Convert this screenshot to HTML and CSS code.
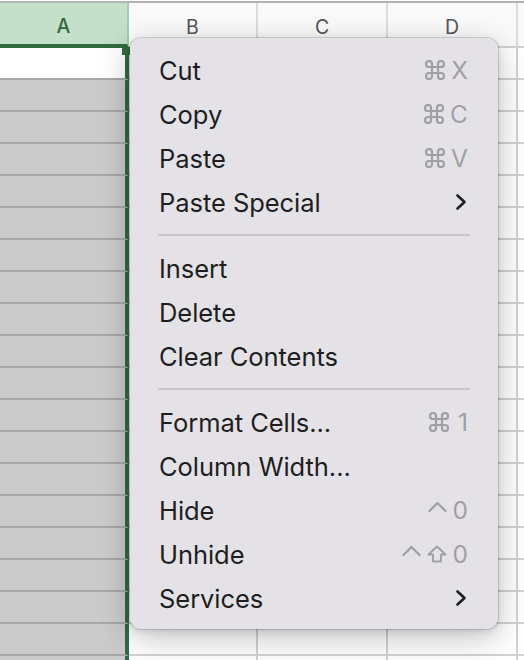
FILE: index.html
```html
<!DOCTYPE html>
<html>
<head>
<meta charset="utf-8">
<link rel="stylesheet" href="styles.css">
</head>
<body>
<div class="sheet">
  <div class="row header">
    <div class="cell ca hdr-a">A</div>
    <div class="cell cb hdr">B</div>
    <div class="cell cc hdr">C</div>
    <div class="cell cd hdr">D</div>
    <div class="cell ce hdr"></div>
  </div>
  <div class="row"><div class="cell ca active"></div><div class="cell cb"></div><div class="cell cc"></div><div class="cell cd"></div><div class="cell ce"></div></div>
  <div class="row"><div class="cell ca"></div><div class="cell cb"></div><div class="cell cc"></div><div class="cell cd"></div><div class="cell ce"></div></div>
  <div class="row"><div class="cell ca"></div><div class="cell cb"></div><div class="cell cc"></div><div class="cell cd"></div><div class="cell ce"></div></div>
  <div class="row"><div class="cell ca"></div><div class="cell cb"></div><div class="cell cc"></div><div class="cell cd"></div><div class="cell ce"></div></div>
  <div class="row"><div class="cell ca"></div><div class="cell cb"></div><div class="cell cc"></div><div class="cell cd"></div><div class="cell ce"></div></div>
  <div class="row"><div class="cell ca"></div><div class="cell cb"></div><div class="cell cc"></div><div class="cell cd"></div><div class="cell ce"></div></div>
  <div class="row"><div class="cell ca"></div><div class="cell cb"></div><div class="cell cc"></div><div class="cell cd"></div><div class="cell ce"></div></div>
  <div class="row"><div class="cell ca"></div><div class="cell cb"></div><div class="cell cc"></div><div class="cell cd"></div><div class="cell ce"></div></div>
  <div class="row"><div class="cell ca"></div><div class="cell cb"></div><div class="cell cc"></div><div class="cell cd"></div><div class="cell ce"></div></div>
  <div class="row"><div class="cell ca"></div><div class="cell cb"></div><div class="cell cc"></div><div class="cell cd"></div><div class="cell ce"></div></div>
  <div class="row"><div class="cell ca"></div><div class="cell cb"></div><div class="cell cc"></div><div class="cell cd"></div><div class="cell ce"></div></div>
  <div class="row"><div class="cell ca"></div><div class="cell cb"></div><div class="cell cc"></div><div class="cell cd"></div><div class="cell ce"></div></div>
  <div class="row"><div class="cell ca"></div><div class="cell cb"></div><div class="cell cc"></div><div class="cell cd"></div><div class="cell ce"></div></div>
  <div class="row"><div class="cell ca"></div><div class="cell cb"></div><div class="cell cc"></div><div class="cell cd"></div><div class="cell ce"></div></div>
  <div class="row"><div class="cell ca"></div><div class="cell cb"></div><div class="cell cc"></div><div class="cell cd"></div><div class="cell ce"></div></div>
  <div class="row"><div class="cell ca"></div><div class="cell cb"></div><div class="cell cc"></div><div class="cell cd"></div><div class="cell ce"></div></div>
  <div class="row"><div class="cell ca"></div><div class="cell cb"></div><div class="cell cc"></div><div class="cell cd"></div><div class="cell ce"></div></div>
  <div class="row"><div class="cell ca"></div><div class="cell cb"></div><div class="cell cc"></div><div class="cell cd"></div><div class="cell ce"></div></div>
  <div class="row"><div class="cell ca"></div><div class="cell cb"></div><div class="cell cc"></div><div class="cell cd"></div><div class="cell ce"></div></div>
  <div class="row"><div class="cell ca"></div><div class="cell cb"></div><div class="cell cc"></div><div class="cell cd"></div><div class="cell ce"></div></div>
</div>
<div class="fill-handle"></div>

<div class="menu">
  <div class="item"><span class="label">Cut</span><span class="keys"><svg class="cmd" width="20" height="20" viewBox="2 2 20 20"><path d="M15 6v12a3 3 0 1 0 3-3H6a3 3 0 1 0 3 3V6a3 3 0 1 0-3 3h12a3 3 0 1 0-3-3"/></svg><span class="key">X</span></span></div>
  <div class="item"><span class="label">Copy</span><span class="keys"><svg class="cmd" width="20" height="20" viewBox="2 2 20 20"><path d="M15 6v12a3 3 0 1 0 3-3H6a3 3 0 1 0 3 3V6a3 3 0 1 0-3 3h12a3 3 0 1 0-3-3"/></svg><span class="key">C</span></span></div>
  <div class="item"><span class="label">Paste</span><span class="keys"><svg class="cmd" width="20" height="20" viewBox="2 2 20 20"><path d="M15 6v12a3 3 0 1 0 3-3H6a3 3 0 1 0 3 3V6a3 3 0 1 0-3 3h12a3 3 0 1 0-3-3"/></svg><span class="key">V</span></span></div>
  <div class="item"><span class="label">Paste Special</span><svg class="chev" width="12" height="18" viewBox="0 0 12 18"><polyline points="2.5,2.5 9.5,9 2.5,15.5"/></svg></div>
  <div class="sep"></div>
  <div class="item"><span class="label">Insert</span></div>
  <div class="item"><span class="label">Delete</span></div>
  <div class="item"><span class="label">Clear Contents</span></div>
  <div class="sep"></div>
  <div class="item"><span class="label">Format Cells...</span><span class="keys"><svg class="cmd" width="20" height="20" viewBox="2 2 20 20"><path d="M15 6v12a3 3 0 1 0 3-3H6a3 3 0 1 0 3 3V6a3 3 0 1 0-3 3h12a3 3 0 1 0-3-3"/></svg><span class="key one">1</span></span></div>
  <div class="item"><span class="label">Column Width...</span></div>
  <div class="item"><span class="label">Hide</span><span class="keys"><svg class="ctrl" width="19" height="18" viewBox="0 0 19 18"><polyline points="1.5,10 9.5,2 17.5,10"/></svg><span class="key">0</span></span></div>
  <div class="item"><span class="label">Unhide</span><span class="keys"><svg class="ctrl" width="19" height="18" viewBox="0 0 19 18"><polyline points="1.5,10 9.5,2 17.5,10"/></svg><svg class="shift" width="20" height="18" viewBox="0 0 20 18"><path d="M10 1.5 L18.5 9.5 H14 V16.5 H6 V9.5 H1.5 Z"/></svg><span class="key">0</span></span></div>
  <div class="item"><span class="label">Services</span><svg class="chev" width="12" height="18" viewBox="0 0 12 18"><polyline points="2.5,2.5 9.5,9 2.5,15.5"/></svg></div>
</div>
</body>
</html>
```

FILE: styles.css
```css
html, body {
  margin: 0;
  padding: 0;
  background: #ffffff;
  width: 524px;
  height: 660px;
  overflow: hidden;
  font-family: Inter, "Liberation Sans", sans-serif;
}

body {
  position: relative;
  padding-top: 1px;
  box-sizing: border-box;
}

.sheet {
  border-top: 2px solid #b3b3b3;
  display: flex;
  flex-direction: column;
}

.row {
  display: flex;
  height: 32px;
  flex: none;
}

.cell {
  box-sizing: border-box;
  height: 100%;
  background: #ffffff;
  border-bottom: 2px solid #d2d2d2;
  border-right: 2px solid #d2d2d2;
}

.ca { width: 129px; flex: none; background: #cbcbcb; border-bottom-color: #a8a8a8; border-right: 4px solid #2f6c3f; }
.ca.active { background: #ffffff; }
.cb { width: 129px; flex: none; }
.cc { width: 130px; flex: none; }
.cd { width: 130px; flex: none; }
.ce { flex: 1; border-right: none; }

.row.header {
  height: 45px;
}

.hdr, .hdr-a {
  display: flex;
  justify-content: center;
  align-items: center;
  padding-top: 5px;
  font-size: 19.5px;
  color: #555555;
  background: #fafafa;
  border-right: 2px solid #dcdcdc;
}

.hdr-a {
  background: #c4dfca;
  color: #2e6a3d;
  font-weight: 500;
  border-bottom: 4px solid #2f6c3f;
  border-right: 2px solid #9fd0a9;
}

.hdr.ce { border-right: none; }

.fill-handle {
  position: absolute;
  left: 122px;
  top: 47px;
  width: 8px;
  height: 8px;
  background: #2f6c3f;
}

.menu {
  position: absolute;
  left: 130px;
  top: 38px;
  width: 368px;
  height: 591px;
  box-sizing: border-box;
  padding: 10px 0 9px;
  background: #e4e2e7;
  border-radius: 11px;
  box-shadow: 0 0 0 1px rgba(0, 0, 0, 0.13), 0 8px 32px rgba(0, 0, 0, 0.26), 0 2px 6px rgba(0, 0, 0, 0.1);
  display: flex;
  flex-direction: column;
}

.item {
  height: 44px;
  flex: none;
  display: flex;
  align-items: center;
  justify-content: space-between;
  padding: 0 30px 0 29px;
}

.label {
  font-size: 25.5px;
  color: #1e1e20;
  letter-spacing: -0.05px;
}

.keys {
  display: flex;
  align-items: center;
  gap: 6px;
  color: #a09fa4;
}

.key {
  font-size: 24.5px;
  color: #a09fa4;
}

.key.one {
  margin-left: 3px;
}

.keys svg {
  fill: none;
  stroke: #a09fa4;
  stroke-width: 2.2;
  stroke-linecap: round;
  stroke-linejoin: round;
}

.keys svg.shift {
  stroke-width: 1.9;
}

.chev {
  margin-right: 1px;
  fill: none;
  stroke: #1f1f21;
  stroke-width: 2.6;
  stroke-linecap: round;
  stroke-linejoin: round;
}

.sep {
  flex: none;
  height: 2px;
  margin: 10px 28px;
  background: #c9c7cc;
}
```
